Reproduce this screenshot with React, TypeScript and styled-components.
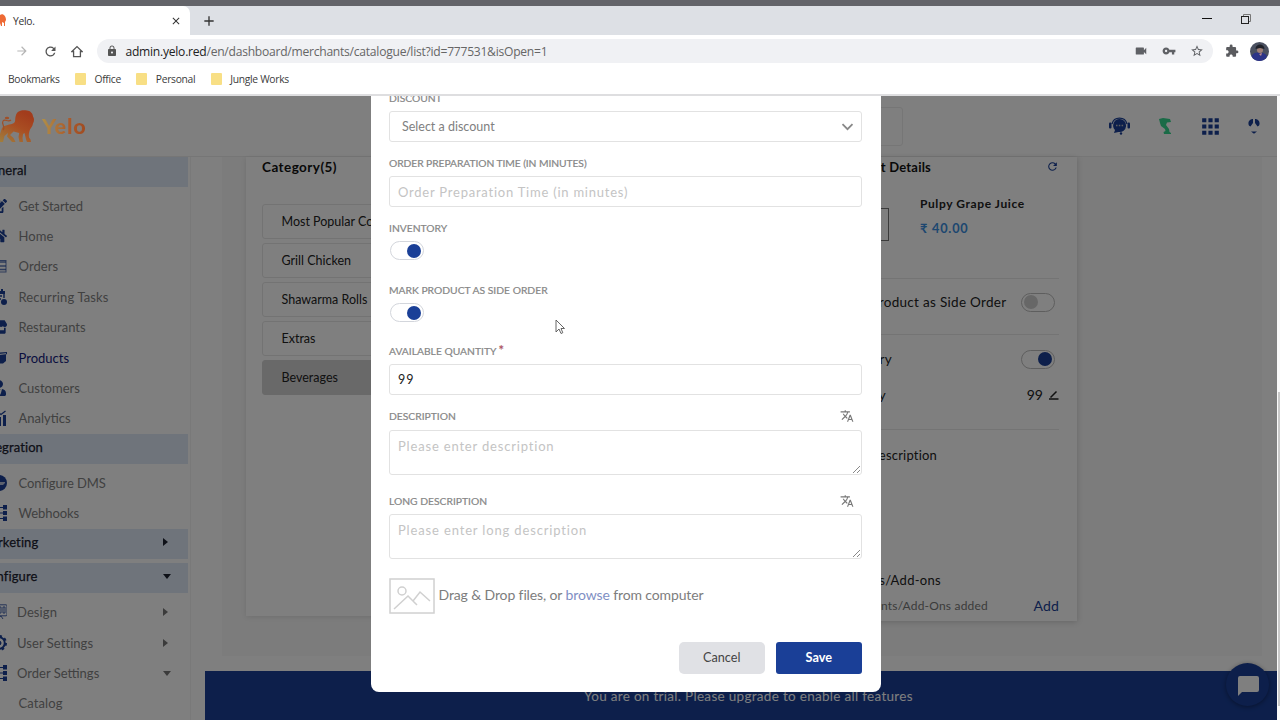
import React from "react";
import styled, { createGlobalStyle } from "styled-components";
import {
  MdLock, MdVideocam, MdVpnKey, MdStarBorder, MdExtension, MdRefresh, MdApps, MdTranslate,
  MdClose, MdAdd, MdArrowForward,
} from "react-icons/md";
import { FaHome, FaStore, FaUserTie, FaEdit } from "react-icons/fa";

const NAVY = "#1a3f97";

const Global = createGlobalStyle`
  * { box-sizing: border-box; }
  body { margin: 0; overflow: hidden; background: #fff; }
`;

const Screen = styled.div`
  width: 1280px;
  height: 720px;
  display: flex;
  flex-direction: column;
  overflow: hidden;
  font-family: Lato, "Liberation Sans", sans-serif;
  color: #222;
`;

const Label = styled.span<{ $size?: number; $ls?: number; $color?: string; $weight?: number }>`
  font-size: ${(p) => p.$size ?? 13}px;
  letter-spacing: ${(p) => p.$ls ?? 0}px;
  color: ${(p) => p.$color ?? "inherit"};
  font-weight: ${(p) => p.$weight ?? 400};
  white-space: nowrap;
`;

/* Browser chrome */
const Chrome = styled.header`
  height: 96px;
  flex: none;
  font-family: "Open Sans", "Noto Sans", sans-serif;
  border-bottom: 2px solid #dedee0;
`;
const TitleEdge = styled.div`
  height: 6px;
  background: #636469;
`;
const TabStrip = styled.div`
  height: 29px;
  background: #dde0e5;
  display: flex;
  align-items: center;
`;
const Tab = styled.div`
  width: 190px;
  height: 29px;
  background: #fff;
  border-radius: 0 7px 0 0;
  display: flex;
  align-items: center;
  color: #333;
  svg { display: block; }
`;
const TabTitle = styled.span`
  width: 157px;
  margin-left: 7px;
  font-size: 10.3px;
  letter-spacing: -0.3px;
`;
const NewTab = styled.div`
  margin-left: 11px;
  width: 16px;
  height: 18px;
  color: #333;
`;
const WindowButtons = styled.div`
  margin-left: auto;
  padding: 0 28px 3px 0;
  display: flex;
  gap: 28px;
  svg { display: block; }
`;
const NavBar = styled.div`
  height: 33px;
  display: flex;
  align-items: center;
  padding: 0 11px 1px 15px;
  color: #555;
  svg { display: block; flex: none; }
`;
const NavIcons = styled.div`
  display: flex;
  align-items: center;
  gap: 13.5px;
`;
const Address = styled.div`
  margin-left: 14px;
  flex: 1;
  height: 24px;
  border-radius: 12px;
  background: #f0f1f4;
  display: flex;
  align-items: center;
  padding: 0 9px 0 9px;
`;
const Url = styled.span`
  margin-left: 7.5px;
  flex: 1;
  font-size: 12.1px;
  letter-spacing: -0.25px;
  color: #666;
  b { font-weight: 400; color: #222; }
`;
const AddressIcons = styled.div`
  display: flex;
  gap: 14px;
  color: #5f6165;
`;
const Tools = styled.div`
  display: flex;
  align-items: center;
  gap: 11px;
  margin-left: 12px;
  color: #5a5b5f;
`;
const Bookmarks = styled.div`
  height: 26px;
  margin-top: -2px;
  display: flex;
  align-items: center;
  padding-left: 8px;
  font-size: 10.3px;
  letter-spacing: -0.3px;
  color: #3c3c3c;
`;
const Bookmark = styled.span`
  display: flex;
  align-items: center;
  gap: 8.5px;
  margin-left: 15.4px;
  &::before {
    content: "";
    width: 11px;
    height: 12px;
    border-radius: 1px;
    background: #f8df85;
  }
`;

/* Dashboard page */
const Viewport = styled.div`
  display: flex;
  height: 624px;
`;
const ScrollTrack = styled.div`
  width: 3px;
  padding: 296px 0 14px 1px;
  background: #fafafa;
  &::before {
    content: "";
    display: block;
    height: 100%;
    background: #c9c9c9;
  }
`;
const Page = styled.div`
  position: relative;
  width: 1277px;
  height: 624px;
  overflow: hidden;
  background: #fff;
`;
const TopBar = styled.div`
  height: 61px;
  display: flex;
  align-items: center;
  border-bottom: 1px solid #ececec;
`;
const Brand = styled.div`
  position: relative;
  z-index: 3;
  width: 100px;
  display: flex;
  align-items: center;
  gap: 7px;
  svg { display: block; }
`;
const BrandName = styled.span`
  font-size: 21.5px;
  line-height: 24px;
  font-weight: 900;
  letter-spacing: 0.9px;
  background: linear-gradient(90deg, #b08f48, #ab5a2a 60%, #a04a20);
  background-clip: text;
  -webkit-background-clip: text;
  color: transparent;
`;
const SearchBox = styled.div`
  width: 260px;
  height: 39px;
  margin-left: 543px;
  border: 1px solid #ececec;
  border-radius: 3px;
`;
const TopIcons = styled.div`
  display: flex;
  align-items: center;
  margin-right: 17px;
  margin-left: auto;
  svg { display: block; }
  svg + svg { margin-left: 29px; }
  svg:nth-child(3) { margin-left: 26px; }
  svg:nth-child(4) { margin-left: 25.5px; }
`;
const Body = styled.div`
  display: flex;
  height: 563px;
`;
const Sidebar = styled.nav`
  width: 191px;
  border-right: 1px solid #f3f3f3;
  overflow: hidden;
  flex: none;
`;
const Band = styled.div<{ $top?: number }>`
  width: 188px;
  height: 30px;
  margin-top: ${(p) => p.$top ?? 0}px;
  padding: 0 16px 4px 0;
  background: #dfe9f7;
  display: flex;
  align-items: center;
  justify-content: space-between;
`;
const BandTitle = styled.span<{ $left: number }>`
  margin-left: ${(p) => p.$left}px;
  font-size: 13px;
  letter-spacing: 0.1px;
  color: #1c2230;
  -webkit-text-stroke: 0.25px #1c2230;
`;
const Items = styled.div<{ $top?: number; $bottom?: number }>`
  padding: ${(p) => p.$top ?? 3.8}px 18px ${(p) => p.$bottom ?? 0}px 0;
`;
const Item = styled.div<{ $active?: boolean; $gap?: number }>`
  height: 30.4px;
  display: flex;
  align-items: center;
  color: ${(p) => (p.$active ? "#13207e" : "#828282")};
  gap: ${(p) => p.$gap ?? 11.5}px;
  > svg { flex: none; color: ${NAVY}; margin-left: -9px; width: 16px; height: 16px; }
`;
const SubItem = styled(Item)`
  padding-left: 18.5px;
`;
const Caret = styled.i<{ $open?: boolean; $color: string }>`
  margin-left: auto;
  margin-right: ${(p) => (p.$open ? 1 : 4)}px;
  border: 4px solid transparent;
  ${(p) =>
    p.$open
      ? `border-top: 5px solid ${p.$color}; border-bottom: 0;`
      : `border-left: 5px solid ${p.$color}; border-right: 0;`}
`;
const Main = styled.main`
  flex: 1;
  display: flex;
  flex-direction: column;
  min-width: 0;
`;
const Workspace = styled.div`
  margin-left: 31px;
  margin-right: 15px;
  height: 499px;
  background: #f8f8f8;
  display: flex;
  justify-content: space-between;
  align-items: flex-start;
  padding: 0 185px 0 24px;
`;
const CategoryPanel = styled.section`
  width: 240px;
  height: 459px;
  background: #fff;
  box-shadow: 0 1px 5px rgba(0, 0, 0, 0.1);
  padding: 0 0 0 16px;
`;
const PanelTitle = styled.h2`
  margin: 0;
  height: 47px;
  font-size: 13.5px;
  line-height: 20px;
  letter-spacing: 0.45px;
  color: #111;
`;
const Category = styled.div<{ $active?: boolean }>`
  height: 35px;
  margin-bottom: 4px;
  border: 1px solid ${(p) => (p.$active ? "#d3d3d3" : "#e6e6e6")};
  background: ${(p) => (p.$active ? "#d3d3d3" : "#fff")};
  border-radius: 3px;
  display: flex;
  align-items: center;
  padding: 0 0 0 18.5px;
`;
const DetailPanel = styled.section`
  width: 320px;
  height: 464px;
  background: #fff;
  box-shadow: 0 1px 6px rgba(0, 0, 0, 0.18);
  padding: 0 18px 0 20px;
  display: flex;
  flex-direction: column;
`;
const DetailRow = styled.div<{ $h: number; $line?: boolean; $lift?: number; $inset?: number }>`
  height: ${(p) => p.$h}px;
  flex: none;
  display: flex;
  align-items: center;
  justify-content: space-between;
  padding: 0 ${(p) => p.$inset ?? 0}px ${(p) => p.$lift ?? 0}px 0;
  border-bottom: ${(p) => (p.$line ? "1px solid #e8e8e8" : "0")};
  svg { display: block; }
`;
const DetailText = styled.div<{ $end: number }>`
  width: ${(p) => p.$end}px;
  display: flex;
  justify-content: flex-end;
`;
const Product = styled.div`
  height: 103px;
  flex: none;
  display: flex;
  gap: 31px;
  padding-left: 66px;
  border-bottom: 1px solid #e8e8e8;
`;
const ProductImage = styled.div`
  width: 46px;
  height: 33px;
  margin-top: 32px;
  border: 1px solid #777;
`;
const ProductText = styled.div`
  display: flex;
  flex-direction: column;
  gap: 8px;
  padding-top: 20px;
  line-height: 16px;
`;
const Quantity = styled.div`
  display: flex;
  align-items: center;
  gap: 6px;
`;
const TrialBanner = styled.div`
  margin-left: 14px;
  margin-top: 15px;
  flex: 1;
  background: ${NAVY};
  display: flex;
  align-items: center;
  padding-left: 379px;
`;
const ChatButton = styled.div`
  position: absolute;
  right: 8px;
  top: 567px;
  width: 43px;
  height: 43px;
  border-radius: 50%;
  background: ${NAVY};
  box-shadow: 0 1px 5px rgba(0, 0, 0, 0.4);
  display: flex;
  align-items: center;
  justify-content: center;
  padding: 3px 0 0 1px;
`;
const Backdrop = styled.div`
  position: absolute;
  inset: 0;
  z-index: 2;
  background: rgba(0, 0, 0, 0.5);
`;

/* Product dialog */
const Dialog = styled.div`
  position: absolute;
  z-index: 4;
  left: 371px;
  top: -10px;
  width: 510px;
  height: 606px;
  background: #fff;
  border-radius: 8px;
  padding: 5px 19px 0 18px;
  display: flex;
  flex-direction: column;
`;
const FieldLabel = styled.div<{ $top?: number; $bottom?: number }>`
  height: 14px;
  line-height: 14px;
  margin-top: ${(p) => p.$top ?? 14}px;
  margin-bottom: ${(p) => p.$bottom ?? 6}px;
  display: flex;
  justify-content: space-between;
  color: #868686;
  padding-right: 8px;
  svg { display: block; color: #777; }
  sup { color: #d0213c; font-size: 13px; line-height: 10px; margin-left: 2px; vertical-align: 0; }
`;
const Caption = styled.span<{ $ls?: number }>`
  font-size: 10.3px;
  letter-spacing: ${(p) => p.$ls ?? 0}px;
  -webkit-text-stroke: 0.2px #868686;
`;
const Field = styled.div<{ $pad?: number }>`
  height: 31px;
  flex: none;
  border: 1px solid #e2e2e2;
  border-radius: 3px;
  padding: 0 7px 0 ${(p) => p.$pad ?? 8}px;
  display: flex;
  align-items: center;
  justify-content: space-between;
`;
const Area = styled(Field)`
  height: 45px;
  align-items: flex-start;
  padding: 6.5px 0 0 8px;
  svg { align-self: flex-end; }
`;
const Toggle = styled.div<{ $on?: boolean; $dim?: boolean }>`
  width: 34px;
  height: 19px;
  flex: none;
  margin-left: 1px;
  border: 1px solid ${(p) => (p.$dim ? "#bdbdbd" : "#d3d6dc")};
  border-radius: 10px;
  padding: 0 2px;
  display: flex;
  align-items: center;
  justify-content: ${(p) => (p.$on ? "flex-end" : "flex-start")};
  &::after {
    content: "";
    width: 14px;
    height: 14px;
    border-radius: 50%;
    background: ${(p) => (p.$on ? NAVY : "#cfcfcf")};
  }
`;
const Upload = styled.div`
  margin-top: 19px;
  height: 36px;
  display: flex;
  align-items: center;
  gap: 3.5px;
  color: #7d7d7d;
  > span { padding-bottom: 3px; }
  em { font-style: normal; color: #7f8fc4; }
`;
const Actions = styled.div`
  margin-top: 28px;
  display: flex;
  justify-content: flex-end;
  gap: 10.5px;
`;
const Button = styled.button<{ $primary?: boolean }>`
  width: 86.5px;
  height: 31.5px;
  border: 0;
  padding: 0 0 1px;
  border-radius: ${(p) => (p.$primary ? 3 : 5)}px;
  font-family: inherit;
  font-size: 12.7px;
  font-weight: ${(p) => (p.$primary ? 700 : 400)};
  color: ${(p) => (p.$primary ? "#fff" : "#444")};
  background: ${(p) => (p.$primary ? NAVY : "#e0e1e5")};
`;
const Cursor = styled.svg`
  position: absolute;
  z-index: 5;
  left: 555px;
  top: 223px;
`;

const Lion = () => (
  <svg width="35" height="35" viewBox="0 0 35 35">
    <defs>
      <linearGradient id="mane" x1="0" y1="1" x2="0.6" y2="0">
        <stop offset="0" stopColor="#a0803e" />
        <stop offset="0.6" stopColor="#a94d22" />
        <stop offset="1" stopColor="#a23c1c" />
      </linearGradient>
    </defs>
    <path
      fill="url(#mane)"
      d="M16 6c1-4 6-5.500 11-4.500 3 0 6 3 6 6 1.500 2 1.200 5 0 7-.5 3-2 4-3 6-1 3-1.500 5-1 8l1.500 2 .5 2.500h-4l-.8-2-1.700-7-1.500 1-.5 4 .5 4h-3.500l-1-5 .7-4-5.700-1.500-3.500 3.500 3.500 3 2 4H12l-5-5.500 1-3.500-3.500 3L3 33h-5l1.500-4 .5-4 2-6c3-3.500 8-3 12-5 2-2 .5-4 2-8z"
    />
    <path d="M3 21c3-3-2-6 0-9 2-2.500 5 1.500 8-1" fill="none" stroke="#a05028" strokeWidth="1.200" />
    <ellipse cx="7" cy="9" rx="2.200" ry="1.300" fill="#a05028" />
  </svg>
);

const Hook = () => (
  <svg viewBox="0 0 16 16">
    <path d="M0 8h7M7.500 2.500v11M7.500 2.500H12M7 8h5M7.500 13.500H12" stroke="currentColor" strokeWidth="1.200" fill="none" />
    <path d="M12 0h4v4.500h-4zM12 6h4v4h-4zM12 11.500h4V16h-4z" fill="currentColor" />
  </svg>
);
const OrdersIcon = () => (
  <svg viewBox="0 0 16 16" fill="none" stroke="currentColor">
    <rect x="1" y="2.500" width="14" height="11.500" strokeWidth="1" opacity="0.7" />
    <path d="M1 4h14M1 8h14M1 11.500h14" strokeWidth="1.600" opacity="0.7" />
  </svg>
);
const CalendarIcon = () => (
  <svg viewBox="0 0 16 16">
    <path d="M0 2h14v3H0zM10 0h2v3h-2z" fill="currentColor" />
    <path d="M1 5v10h8M13 5v4M5 7h2M9 7h2M5 10h2M9 10h1" stroke="currentColor" strokeWidth="1.400" fill="none" />
    <circle cx="13" cy="13" r="3" fill="currentColor" />
  </svg>
);
const ProductsIcon = () => (
  <svg viewBox="0 0 16 16">
    <path d="M0 3l16-1v2l-1 .5V11l-3 2.500H0z" fill="currentColor" />
    <path d="M8 4.500l7-.8" stroke="#fff" />
  </svg>
);
const ChartIcon = () => (
  <svg viewBox="0 0 16 16">
    <path d="M3 9h2.500v7H3zM7.500 7H10v9H7.500zM12 5h3v11h-3z" fill="currentColor" />
    <path d="M3 6l5-3 2 1.500L14.500 1" stroke="currentColor" strokeWidth="1.300" fill="none" />
  </svg>
);
const DmsIcon = () => (
  <svg viewBox="0 0 16 16">
    <circle cx="8" cy="8" r="8" fill="currentColor" />
    <path d="M7 7h7v1l-2 2H7z" fill="#b8c3dd" />
  </svg>
);
const DesignIcon = () => (
  <svg viewBox="0 0 16 16" fill="none" stroke="currentColor" opacity="0.8">
    <rect x="1" y="0.800" width="15" height="11" rx="1" />
    <path d="M8 3h2v6H8zM12 3h2v6h-2zM6 15l4-3 2 3" />
  </svg>
);
const GearIcon = () => (
  <svg viewBox="0 0 16 16" fill="none" stroke="currentColor">
    <circle cx="8" cy="8" r="5.800" strokeWidth="2" />
    <circle cx="8" cy="8" r="7" strokeWidth="2" strokeDasharray="2.750 2.750" />
    <circle cx="8" cy="8" r="2" fill="currentColor" />
  </svg>
);
const Grip = () => (
  <svg width="9" height="9" viewBox="0 0 9 9" stroke="#888" fill="none">
    <path d="M1 8L8 1M5 8L8 5" />
  </svg>
);

const menu = [
  { name: "Get Started", icon: <FaEdit />, ls: -0.1 },
  { name: "Home", icon: <FaHome />, ls: 0.1 },
  { name: "Orders", icon: <OrdersIcon />, ls: 0.1 },
  { name: "Recurring Tasks", icon: <CalendarIcon />, ls: 0.13 },
  { name: "Restaurants", icon: <FaStore />, ls: 0 },
  { name: "Products", icon: <ProductsIcon />, ls: 0, active: true },
  { name: "Customers", icon: <FaUserTie />, ls: 0 },
  { name: "Analytics", icon: <ChartIcon />, ls: 0 },
];

const categories = ["Most Popular Co", "Grill Chicken", "Shawarma Rolls", "Extras", "Beverages"];

export default function App() {
  return (
    <Screen>
      <Global />
      <Chrome>
        <TitleEdge />
        <TabStrip>
          <Tab>
            <svg width="6" height="13" viewBox="0 0 6 13"><path d="M0 1c3-2 6 1 6 5L5 8v4H4V9L2 8v4H1L0 9z" fill="#ee6a35" /></svg>
            <TabTitle>Yelo.</TabTitle>
            <MdClose size={12} />
          </Tab>
          <NewTab><MdAdd size={16} /></NewTab>
          <WindowButtons>
            <svg width="10" height="12" viewBox="0 0 10 12"><path d="M0 5.500h10" stroke="#111" /></svg>
            <svg width="12" height="12" viewBox="0 0 12 12" fill="none" stroke="#222"><path d="M3.500 3.500V1.500h7v7H8.500" stroke="#777" /><rect x="1.500" y="3.500" width="7" height="7" /></svg>
          </WindowButtons>
        </TabStrip>
        <NavBar>
          <NavIcons>
            <MdArrowForward size={14} color="#b5b5b5" />
            <MdRefresh size={15} />
            <svg width="12" height="13" viewBox="0 0 13 13" fill="none" stroke="#555" strokeWidth="1.400"><path d="M1 6.500L6.500 1.200 12 6.500H10.200V12H2.800V6.500z" /></svg>
          </NavIcons>
          <Address>
            <MdLock size={12} />
            <Url><b>admin.yelo.red</b>/en/dashboard/merchants/catalogue/list?id=777531&amp;isOpen=1</Url>
            <AddressIcons>
              <MdVideocam size={14} />
              <MdVpnKey size={14} />
              <MdStarBorder size={14} />
            </AddressIcons>
          </Address>
          <Tools>
            <MdExtension size={14} />
            <svg width="19" height="19" viewBox="0 0 19 19">
              <circle cx="9.500" cy="9.500" r="9.500" fill="#4a5060" />
              <path d="M1.500 14.500C3 11 5 10.500 9 10.500s7 1 8 4c-3 6-12 6-15.500 0z" fill="#2c3488" />
              <circle cx="10" cy="8" r="3" fill="#a08078" />
              <path d="M5.500 7c0-6 9-6 9 0l-4.500-1z" fill="#1e2028" />
              <path d="M9 12l2 2 1-3z" fill="#c08a86" />
            </svg>
          </Tools>
        </NavBar>
        <Bookmarks>
          Bookmarks
          <Bookmark>Office</Bookmark>
          <Bookmark>Personal</Bookmark>
          <Bookmark>Jungle Works</Bookmark>
        </Bookmarks>
      </Chrome>

      <Viewport>
        <Page>
          <TopBar>
            <Brand>
              <Lion />
              <BrandName>Yelo</BrandName>
            </Brand>
            <SearchBox />
            <TopIcons>
              <svg width="21" height="20" viewBox="0 0 21 20">
                <path d="M3 8a7.700 7.700 0 0 1 15 0" fill="none" stroke={NAVY} strokeWidth="1.200" />
                <rect x="0" y="6.500" width="2.500" height="6" rx="1" fill={NAVY} />
                <rect x="18.500" y="6.500" width="2.500" height="6" rx="1" fill={NAVY} />
                <path d="M10.500 3a6.500 6.500 0 1 1-1 12.900L5 17l1-3A6.500 6.500 0 0 1 10.500 3z" fill={NAVY} />
                <path d="M7 9.500h1.500M9.800 9.500h1.500M12.600 9.500h1.500" stroke="#bbb" strokeWidth="1.300" />
                <circle cx="12" cy="17.500" r="1.200" fill={NAVY} />
              </svg>
              <svg width="13" height="18" viewBox="0 0 13 18"><path d="M0 2l4-1 7 1 1 3-4 .5L7 8l3 4 .5 3 1.500 1v1H5l-.5-2 2-1L6 12l-4-3L1 6z" fill="#35d68f" /></svg>
              <MdApps size={25} color={NAVY} />
              <svg width="12" height="18" viewBox="0 0 12 18" fill={NAVY}><path d="M5 2v4L2.500 9.500C-1 8.500 0 2 5 2zM7 2v4l2.500 3.500C13 8.500 12 2 7 2zM3 14.500h6L6 16.800z" /></svg>
            </TopIcons>
          </TopBar>

          <Body>
            <Sidebar>
              <Band><BandTitle $left={-18.5}>General</BandTitle></Band>
              <Items $top={3.4} $bottom={0.4}>
                {menu.map((m) => (
                  <Item key={m.name} $active={m.active}>
                    {m.icon}
                    <Label $ls={m.ls}>{m.name}</Label>
                  </Item>
                ))}
              </Items>
              <Band><BandTitle $left={-20.5}>Integration</BandTitle></Band>
              <Items $bottom={0.6}>
                <Item><DmsIcon /><Label $ls={-0.1}>Configure DMS</Label></Item>
                <Item><Hook /><Label $ls={-0.05}>Webhooks</Label></Item>
              </Items>
              <Band><BandTitle $left={-20.5}>Marketing</BandTitle><Caret $color="#1c2230" /></Band>
              <Band $top={4}><BandTitle $left={-19.5}>Configure</BandTitle><Caret $open $color="#1c2230" /></Band>
              <Items $top={4}>
                <Item $gap={10}><DesignIcon /><Label $ls={0.1}>Design</Label><Caret $color="#777" /></Item>
                <Item $gap={10}><GearIcon /><Label $ls={0.05}>User Settings</Label><Caret $color="#777" /></Item>
                <Item $gap={10}><Hook /><Label $ls={0}>Order Settings</Label><Caret $open $color="#777" /></Item>
                <SubItem><Label $ls={0.1}>Catalog</Label></SubItem>
              </Items>
            </Sidebar>

            <Main>
              <Workspace>
                <CategoryPanel>
                  <PanelTitle>Category(5)</PanelTitle>
                  {categories.map((c) => (
                    <Category key={c} $active={c === "Beverages"}><Label $size={12.5}>{c}</Label></Category>
                  ))}
                </CategoryPanel>
                <DetailPanel>
                  <DetailRow $h={19}>
                    <DetailText $end={154}><Label $weight={700} $ls={0.2} $color="#111">Product Details</Label></DetailText>
                    <MdRefresh size={13} color={NAVY} />
                  </DetailRow>
                  <Product>
                    <ProductImage />
                    <ProductText>
                      <Label $size={12} $weight={700} $ls={0.6}>Pulpy Grape Juice</Label>
                      <Label $size={12.7} $weight={700} $ls={0.8} $color="#3a8ee0">₹ 40.00</Label>
                    </ProductText>
                  </Product>
                  <DetailRow $h={56} $line $lift={9} $inset={4.5}>
                    <DetailText $end={229.5}><Label $size={13.5} $ls={0.3}>Mark Product as Side Order</Label></DetailText>
                    <Toggle $dim />
                  </DetailRow>
                  <DetailRow $h={48} $inset={4.5}>
                    <DetailText $end={115}><Label $size={13.5} $ls={0.3}>Inventory</Label></DetailText>
                    <Toggle $on $dim />
                  </DetailRow>
                  <DetailRow $h={47} $line $lift={23}>
                    <DetailText $end={109}><Label $size={13.5} $ls={0.3}>Quantity</Label></DetailText>
                    <Quantity>
                      <Label $size={14}>99</Label>
                      <svg width="10" height="10" viewBox="0 0 10 10"><path d="M0 9h9.500M1.500 7.500l6-6" stroke="#222" strokeWidth="1.500" fill="none" /></svg>
                    </Quantity>
                  </DetailRow>
                  <DetailRow $h={50}>
                    <DetailText $end={160}><Label $ls={0.2}>Description</Label></DetailText>
                  </DetailRow>
                  <DetailRow $h={76} />
                  <DetailRow $h={48}>
                    <DetailText $end={164}><Label $ls={0.3}>Ingredients/Add-ons</Label></DetailText>
                  </DetailRow>
                  <DetailRow $h={3}>
                    <DetailText $end={211}><Label $size={12} $ls={0.2} $color="#777">No Ingredients/Add-Ons added</Label></DetailText>
                    <Label $size={14} $ls={0.2} $color={NAVY}>Add</Label>
                  </DetailRow>
                </DetailPanel>
              </Workspace>
              <TrialBanner>
                <Label $size={13.5} $ls={0.3} $color="#fff">You are on trial. Please upgrade to enable all features</Label>
              </TrialBanner>
            </Main>
          </Body>

          <ChatButton><svg width="21" height="21" viewBox="0 0 21 21"><path d="M2 0h17q2 0 2 2v12q0 2-2 2H4l-4 4V2q0-2 2-2z" fill="#fff" /></svg></ChatButton>
          <Backdrop />

          <Dialog>
            <FieldLabel $top={0}><Caption>DISCOUNT</Caption></FieldLabel>
            <Field $pad={12}>
              <Label $size={12.5} $color="#808080">Select a discount</Label>
              <svg width="13" height="8" viewBox="0 0 13 8" fill="none" stroke="#888" strokeWidth="1.800"><path d="M1.500 1.200L6.500 6.200 11.500 1.200" /></svg>
            </Field>
            <FieldLabel><Caption $ls={-0.08}>ORDER PREPARATION TIME (IN MINUTES)</Caption></FieldLabel>
            <Field><Label $ls={0.77} $color="#c4c4c4">Order Preparation Time (in minutes)</Label></Field>
            <FieldLabel><Caption>INVENTORY</Caption></FieldLabel>
            <Toggle $on />
            <FieldLabel $top={23}><Caption>MARK PRODUCT AS SIDE ORDER</Caption></FieldLabel>
            <Toggle $on />
            <FieldLabel $top={22}><Caption>AVAILABLE QUANTITY<sup>*</sup></Caption></FieldLabel>
            <Field><Label $size={12.5} $ls={1.1}>99</Label></Field>
            <FieldLabel $bottom={7}><Caption>DESCRIPTION</Caption><MdTranslate size={14} /></FieldLabel>
            <Area><Label $ls={0.82} $color="#c4c4c4">Please enter description</Label><Grip /></Area>
            <FieldLabel $top={19}><Caption>LONG DESCRIPTION</Caption><MdTranslate size={14} /></FieldLabel>
            <Area><Label $ls={0.85} $color="#c4c4c4">Please enter long description</Label><Grip /></Area>
            <Upload>
              <svg width="46" height="36" viewBox="0 0 46 36" fill="none" stroke="#d0d0d0" strokeWidth="1.500">
                <rect x="1" y="1" width="44" height="34" />
                <circle cx="13" cy="13" r="4" />
                <path d="M5 31L19 18 28 27M24 23L31 14 41 23" />
              </svg>
              <Label $size={14} $ls={-0.12}>Drag &amp; Drop files, or <em>browse</em> from computer</Label>
            </Upload>
            <Actions>
              <Button>Cancel</Button>
              <Button $primary>Save</Button>
            </Actions>
          </Dialog>
          <Cursor width="10" height="16" viewBox="0 0 10 16">
            <path d="M1 1v12l3-3 2 4.500 1.800-.8L6 9.500h3.500z" fill="#fff" stroke="#555" strokeWidth="0.900" />
          </Cursor>
        </Page>
        <ScrollTrack />
      </Viewport>
    </Screen>
  );
}
